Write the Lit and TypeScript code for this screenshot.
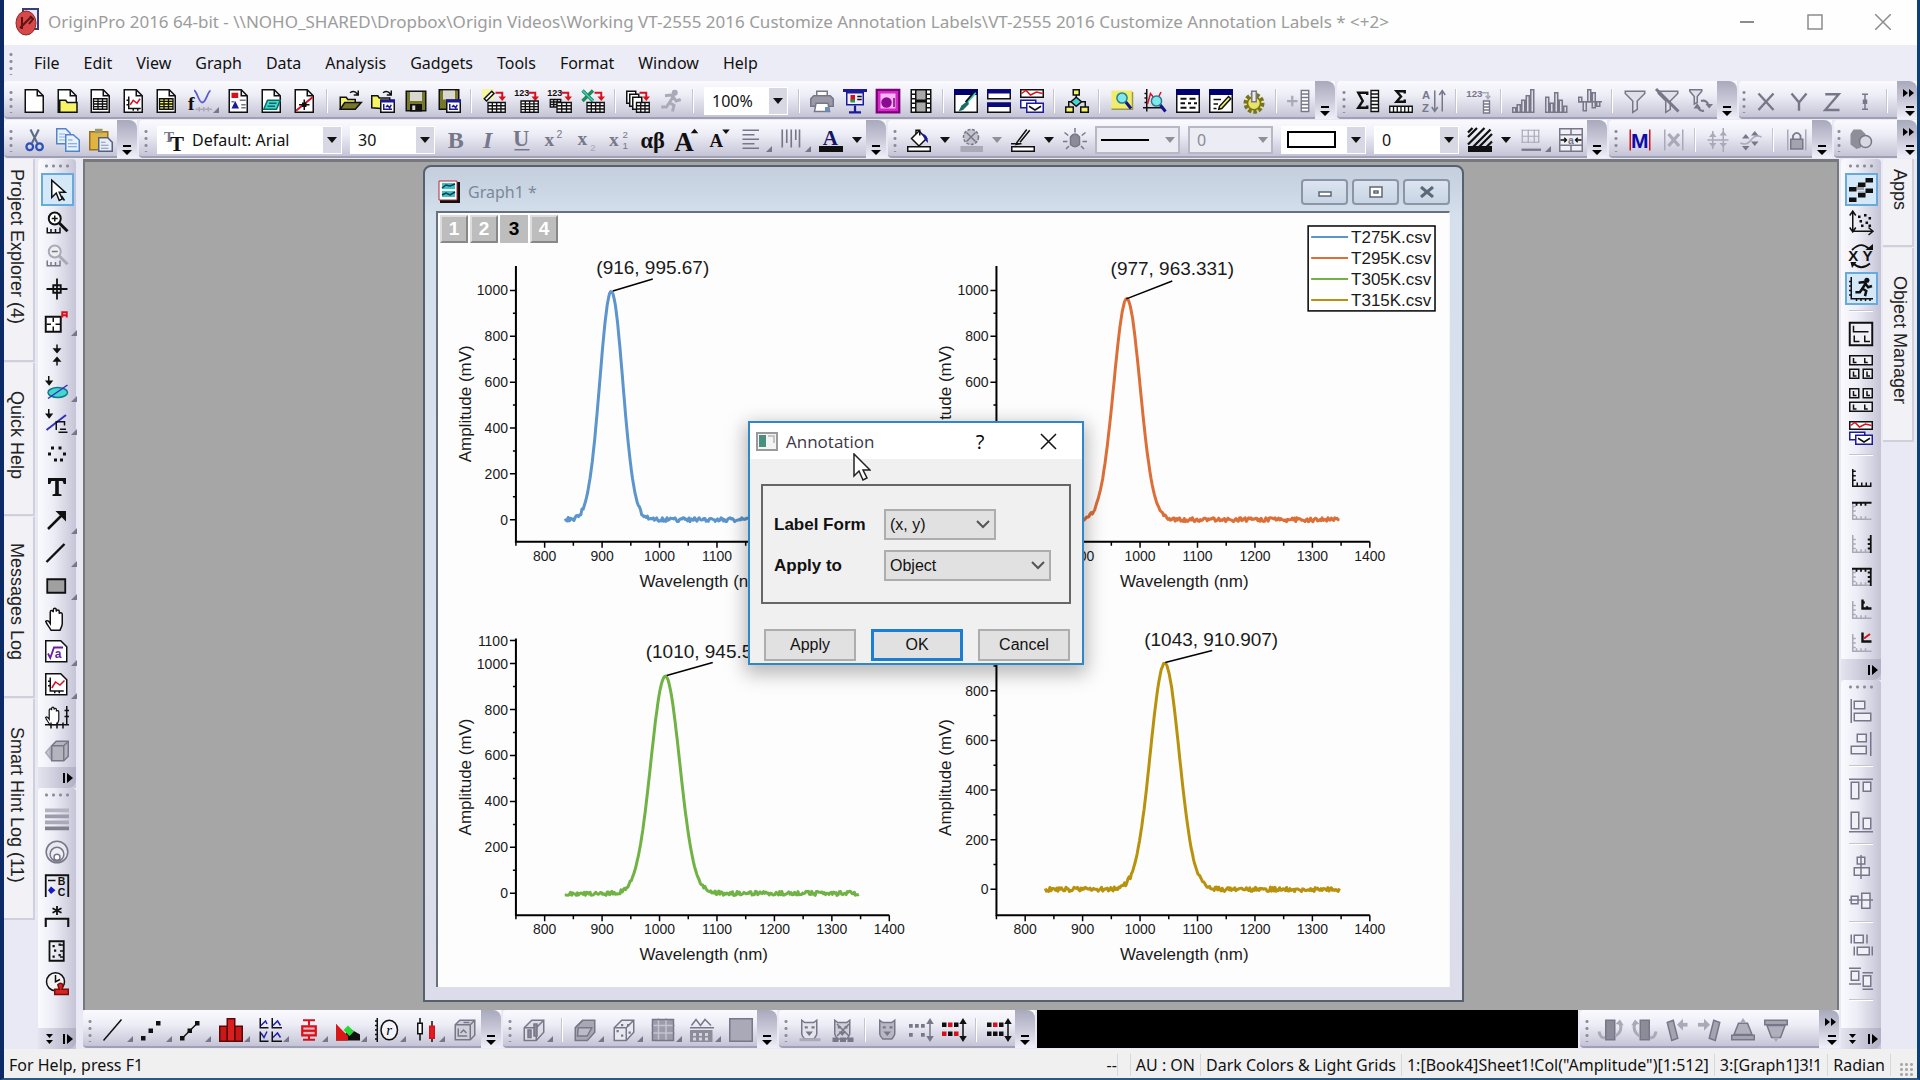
import { LitElement, html, svg, css, nothing } from "lit";
import { customElement } from "lit/decorators.js";
import { classMap } from "lit/directives/class-map.js";

const K = "#101010";
const G = "#77778a";
const L = "#a9a9b8";
const N = "#1a1a9a";
const R = "#d8101c";
const Y = "#f4f464";
const C = "#45d6cf";
const O = "#77772a";
const W = "#ffffff";

const s = (d: string, c = K, w = 1) =>
  svg`<path d=${d} fill="none" stroke=${c} stroke-width=${w}></path>`;
const f = (d: string, c = K) => svg`<path d=${d} fill=${c}></path>`;
const b = (d: string, fill = W, c = K, w = 1) =>
  svg`<path d=${d} fill=${fill} stroke=${c} stroke-width=${w}></path>`;
const t = (x: number, y: number, str: string, size: number, c = K, fam = "Liberation Sans", weight = "bold") =>
  svg`<text x=${x} y=${y} font-size=${size} fill=${c} font-family="${fam}, sans-serif" font-weight=${weight}>${str}</text>`;

const grid = (x: number, y: number, w: number, h: number, nx: number, ny: number, c = K, fill = W) => {
  let d = `M${x} ${y}h${w}v${h}h${-w}z`;
  for (let i = 1; i < nx; i++) d += `M${x + (w * i) / nx} ${y}v${h}`;
  for (let i = 1; i < ny; i++) d += `M${x} ${y + (h * i) / ny}h${w}`;
  return b(d, fill, c, 0.9);
};

const doc = b("M1.5 .5h8l4 4v11h-12z M9.5 .5v4h4");
const redArrow = [s("M9 2.5h4.5v4", R, 1.3), f("M11 5h5l-2.5 3z", R)];
const miniGraph = [b("M6.5 7.5h9v8h-9z"), f("M6 7h10v2H6z", N), s("M8.5 10v3.5h5.5M10 12l1-1 1.5 1.5 1-2", N)];
const winBar = (fill = W) => [b("M.5 .5h15v15H.5z", fill), f("M0 0h16v4H0z", "#000070")];
const lens = (x: number, y: number) => [
  s(`M${x + 2} ${y + 2}l4 5`, "#14148a", 2),
  svg`<circle cx=${x} cy=${y} r="3.4" fill="#7fe8ee" stroke="#2a7f8a"></circle>`,
];
const dots = (pts: string, c = K, r = 2) =>
  pts.split(" ").map((p) => {
    const [x, y] = p.split(",").map(Number);
    return f(`M${x} ${y}h${r}v${r}h${-r}z`, c);
  });
const hand = "M4 15.500c-1-2-3-4-3.500-6 1-1 2 0 3 1.500V3.500c0-1.500 1.800-1.500 2 0V2c.2-1.500 2-1.500 2 0v1c.3-1.300 2-1.300 2 0v1.500c.4-1 2-1 2 .5v6c0 2-1 3-1.500 4.500z";
const runner = (c: string) => [
  svg`<circle cx="10.500" cy="2.500" r="2" fill=${c}></circle>`,
  s("M4 4.500l4-.5 1.500 1L7 9l3 2-1 4M7 9l-2 3H1.500M9.500 5.500l2 2.500 3-1", c, 2),
];
const cube = (fill = "#c6c6d0") => [b("M1.500 6.500l5-5h8v8l-5 5.500h-8z", fill, G), s("M1.500 6.500h8v8.500M9.500 6.500l5-5", G)];
const tickL = (c: string) => s("M2.500 2v11.500H15M2.500 3.500h2M2.500 6.500h2M2.500 9.500h2M5.500 13v-2M8.500 13v-2M11.500 13v-2M14.500 13v-2", c);
const frame = (top: string, right: string, bottom: string, left: string) => [
  s("M2.500 13.500H15M5 13v-1.500M8 13v-1.500M11 13v-1.500", bottom),
  s("M2.500 2v12M3 5h1.500M3 8h1.500M3 11h1.500", left),
  s("M2 2.500H15M5 3v1.500M8 3v1.500M11 3v1.500", top, 1.2),
  s("M14.500 2v12M14 5h-1.500M14 8h-1.500M14 11h-1.500", right, 1.2),
];
const mask = (c = G, fill = "#e4e4ec") => [
  b("M2.500 1.500l2 1.500h6l2-1.500v9q0 1-2 3.500h-6q-2-2-2-3.500z", fill, c),
  f("M4.500 5.500h2v1.500h-2zM9 5.500h2v1.500H9zM5 9h5l-2.500 3z", c),
];
const lPanel = (x: number, y: number, w: number, h: number) => [
  b(`M${x} ${y}h${w}v${h}h${-w}z`, "#f0f0f6"),
  s(`M${x + 2.5} ${y + 1.5}v${h - 3}h2`),
  w > 8 ? s(`M${x + 10} ${y + 1.5}v${h - 3}h2`) : nothing,
];
const updown = (c = K) => [s("M14 2v12", c), f("M11.500 4L14 0l2.500 4zM11.500 12l2.500 4 2.500-4z", c)];

const ICONS: Record<string, unknown> = {
  new: doc,
  folder: [doc, b("M2.500 15.500v-8h4l1 1.500h6.500v6.500z", Y)],
  sheet: [doc, grid(3, 6.500, 9, 7, 3, 4)],
  graph: [doc, s("M4.500 5v8h8M3 7.500h1.500M3 10.500h1.500M7.500 13v1.500M10.500 13v1.500"), s("M5.500 10.500l2-3 2.500 2 2-3", R)],
  matrix: [doc, grid(3, 6.500, 9, 7, 3, 4, K, Y)],
  func: [s("M5 13.500h11M7.500 12v3M10.500 12v3M13.500 12v3", L), s("M4 1c2 0 3 8 5.500 8S13 2 15 1", "#5a5ad8", 1.2), t(0, 14, "f", 13, K, "Liberation Serif")],
  layout: [doc, f("M3 2.500h4.500V6H3z", R), f("M3 13l2.500-5L8 13z", N), s("M8.500 7.500h4M9.500 10.500h3M9.500 12.500h3M3 8.500h2", G)],
  notes: [doc, b("M5 7.500h8.500l-2.500 6H2.500z", C, "#0c6a66"), s("M6 9.500h5M5 11.500h5", "#0c6a66")],
  digitize: [doc, s("M2 14.500l11-9", R, 1.300), s("M7.500 7v7M4 10.500h7"), f("M6 9h3v3H6z")],
  open: [s("M8 2.500q3-2 5 1M13.500 1v3h-3"), b("M1.500 13.500V5.500h4l1 1.500h5v3", Y), b("M1.500 13.500l3-4.500h11l-4 4.500z", O)],
  openx: [s("M8 2.500q3-2 5 1M13.500 1v3h-3"), b("M.5 12.500V4.500h4l1 1.500h7v3l-6 4z", Y), ...miniGraph],
  save: [b("M1.500 1.500h13v13h-13z", O), f("M4 2h8v6H4z", "#d8d8d0"), f("M4 10h8v5H4z"), f("M5.500 11h2v3h-2z", "#d8d8d0")],
  savex: [b("M1.500 .5h13v13h-13z", O), f("M4 1h8v6H4z", "#d8d8d0"), ...miniGraph],
  wiz: [f("M0 0h8v7H0z", "#f6f6a0"), b("M1.500 6.500l5-5 1.500 1.500-5 5z"), ...redArrow, grid(4, 9, 11.500, 6.500, 4, 3)],
  imp1: [t(-0.5, 4.800, "123", 6), ...redArrow, grid(4, 8, 11.500, 7.500, 4, 4)],
  imp2: [t(-0.5, 4.800, "123", 6), ...redArrow, grid(1.500, 7, 7, 5, 3, 3), grid(6, 9, 9.500, 6.500, 3, 3)],
  excel: [s("M1 1l7 7M8 1L1 8", "#1f8a5a", 2.200), s("M1 1l7 7", C, 0.8), ...redArrow, grid(4, 9, 11.500, 6.500, 4, 3)],
  dup: [b("M.5 1.500h6v8h-6z"), b("M2.500 3.500h6v8h-6z"), b("M4.500 5.500h6v8h-6z"), ...redArrow, grid(7, 9, 8.500, 6.500, 3, 3)],
  run: runner(L),
  print: [b("M4.500 5.500v-4h7l0 4", W, G), b("M.5 6.500l2-2h11l2 2v5H.5z", "#9a9aa8", G), b("M4 9.500h8l1 5.500H3z", W, G), f("M10 12h3v3h-3z", "#6a90b8")],
  slide: [f("M0 0h16v2H0z", N), b("M2.500 2.500h11v8h-11z", "#eef", N), f("M5 4h3v4H5z", R), f("M5 7h3v2H5z", "#1c9a48"), s("M9.500 5h3M9.500 7h3", K), s("M8 11v4M4 15.500h8", N, 1.500)],
  purple: [b("M.5 .5h15v15H.5z", "#d428c8", "#7c0078", 1.500), f("M3 3h10v10H3z", "#f9b8f4"), svg`<circle cx="7" cy="9" r="3.500" fill="#8a0a90"></circle>`, s("M12 6v6", "#7c0078")],
  film: [f("M1 0h14v16H1z"), f("M5 1h6v6H5zM5 9h6v6H5z", "#a9a9a9"), ...dots("2,1 2,4 2,7 2,10 2,13 12,1 12,4 12,7 12,10 12,13", W, 2)],
  brush: [...winBar(), s("M14 2L8 9", K, 2), s("M14.500 2.500L9 9", C, 1), f("M9 8l1 2-4 4-3 1 2-4z", "#1b6a66")],
  panels: [b("M.5 .5h15v6H.5zM.5 9.500h15v6H.5z"), f("M0 0h16v3H0zM0 9h16v3H0z", "#0a0a80")],
  cascade: [b("M.5 .5h15v5H.5z"), s("M1 3l3-2 3 3 4-2 4 1", R), b("M.5 7.500h10v5H.5z", W, N), b("M4.500 9.500h11v6h-11z", W, N), s("M6 11.500l4 2.500 4-2.500")],
  flow: [b("M5.500 .5h4v3.500h-4z", Y), s("M7.500 4v2M4 8.500H2.500V12M11 8.500h2.500V12"), b("M7.500 5.500l3.500 3-3.500 3-3.500-3z", C), b("M.5 12h5v3.500h-5zM10.500 12h5v3.500h-5z", Y)],
  zoomg: [f("M1 1h14v12H1z", "#f0ec6c"), s("M1 13.500h14M15 2v12", "#9a9a40"), ...lens(8, 6)],
  zoomx: [s("M2.500 0v15M0 12.500h14M1 3h2M1 6h2M1 9h2"), s("M3 10l2-7 4 5 3-6", R), ...lens(9, 8)],
  tablew: [...winBar(), s("M3 6.500h4M9 6.500h4M3 9.500h3M8 9.500h2M12 9.500h2M3 12.500h4M9 12.500h4", K, 1.200)],
  notew: [...winBar(), s("M3 7h5M3 10h3M3 13h2", K), b("M13 5l1.500 1.500-6 6.500-2 .5.5-2z", Y)],
  gear: [svg`<circle cx="8" cy="9.500" r="5.500" fill="#d8d24a" stroke="#77731a" stroke-width="3" stroke-dasharray="2.200 1.200"></circle>`, svg`<circle cx="8" cy="9.500" r="4.300" fill="#e8e268" stroke="#77731a"></circle>`, b("M6.500 1.500h3v7h-3z", "#ececec", G)],
  addcol: [s("M0 8h7M3.500 4.500v7", L, 1.500), grid(9.500, 1, 5, 14, 1, 6, G)],
  sumcol: [s("M7.500 4V2.500H1.500L4.500 8l-3 4.500h6V11", K, 1.600), grid(10, 1, 5, 14, 1, 6)],
  sumrow: [s("M10.500 3V1.500H5L8 5l-3 3.500h5.500V7", K, 1.600), grid(0.500, 11.500, 15, 4, 6, 1)],
  sortaz: [t(0, 6.500, "A", 7.500, G), t(0, 15, "Z", 7.500, G), s("M8.500 1v13M6.500 12l2 3 2-3M13.500 15V1M11.500 4l2-3 2 3", G)],
  setcol: [t(-0.5, 5, "123", 6.500, G), s("M10 2.500h4v3M12.500 4.500l1.500 2 1.500-2", L), grid(11, 8, 4, 8, 1, 4, G)],
  bars1: [b("M.5 12.500h2v3h-2zM3.500 10.500h2v5h-2zM6.500 7.500h2v8h-2zM9.500 4.500h2v11h-2zM12.500 .5h2v15h-2z", "#dcdce4", G)],
  bars2: [b("M.5 5.500h2v10h-2zM3.500 9.500h2v6h-2zM6.500 2.500h2v13h-2zM9.500 7.500h2v8h-2zM12.500 11.500h2v4h-2z", "#dcdce4", G)],
  bars3: [s("M0 8.500h16", G), b("M.5 5.500h2v3h-2zM3.500 8.500h2v6h-2zM6.500 .5h2v8h-2zM9.500 8.500h2v4h-2zM9.500 2.500h2v6h-2zM12.500 8.500h2v3h-2z", "#dcdce4", G)],
  funnel: [b("M1.500 1.500h13v1.500l-5 5v5.500l-3 2V8l-5-5z", "#e0e0e8", G)],
  funneloff: [b("M1.500 1.500h13v1.500l-5 5v5.500l-3 2V8l-5-5z", "#e0e0e8", G), s("M0 0l15 15", G, 2)],
  funnelref: [b("M.5 .5h8v1L5.500 5v4l-2 1V5l-3-3.500z", "#e0e0e8", G), s("M6 12q1 3 4 2.500M8 8q4-1 5 3", G, 1.500), f("M11 10h5l-2.500 3zM3 13h5L5.500 9.500z", G)],
  X: s("M3 3l10 11M13 3L3 14", G, 1.600),
  Y: s("M3 3l5 6v5.500M13 3L8 9", G, 1.600),
  Z: s("M3.500 3.500h9l-9 10.500h9.500", G, 1.600),
  err: [s("M8 3v11M6 3.500h4M6 13.500h4", G), f("M6.500 7h3v3h-3z", G)],
  cut: [s("M5 1l4.500 9M10.500 1L6 10", "#5c6c88", 1.400), svg`<circle cx="4.500" cy="12.500" r="2.200" fill="none" stroke="#2c50b8" stroke-width="1.500"></circle>`, svg`<circle cx="11" cy="12.500" r="2.200" fill="none" stroke="#2c50b8" stroke-width="1.500"></circle>`],
  copy: [b("M.5 .5h6l3 3v7h-9z", "#e8f2ff", "#5484c8"), s("M2 4h4M2 6h5M2 8h5", "#8cb0e0", 0.8), b("M6.500 4.500h5l4 3.500v7.500h-9z", "#e8f2ff", "#5484c8"), s("M8 8h3M8 10.500h6M8 12.500h6", "#6c9cd8", 0.8)],
  paste: [b("M.5 2.500h12v12H.5z", "#e0b440", "#96701c"), f("M4 .5h5v3H4z", "#9c9868"), b("M6.500 6.500h6l3 3v6h-9z", "#e8eefa", "#54607c"), s("M8 9.500h3M8 11.500h5M8 13.500h5", "#8894b0", 0.8)],
  sup: [t(1, 12, "x", 13, G, "Liberation Serif"), t(9, 6.500, "2", 7, G, "Liberation Sans", "normal")],
  sub: [t(1, 11, "x", 13, G, "Liberation Serif"), t(9.500, 15.500, "2", 6.500, L, "Liberation Sans", "normal")],
  supsub: [t(0, 12, "x", 13, G, "Liberation Serif"), t(9, 6.500, "2", 6.500, G, "Liberation Sans", "normal"), t(9, 14, "1", 6.500, G, "Liberation Sans", "normal")],
  ab: t(-1, 13, "αβ", 15, K, "Liberation Serif"),
  fontup: [t(-0.5, 15, "A", 18, K, "Liberation Serif"), f("M10.500 3.500L13 .5l2.500 3z")],
  fontdn: [t(1, 12.500, "A", 12.500, K, "Liberation Serif"), f("M9.500 1h5L12 4z")],
  bold: t(2.500, 13.500, "B", 16, G, "Liberation Serif"),
  italic: svg`<text x="4" y="13.500" font-size="16" fill=${G} font-family="Liberation Serif, serif" font-weight="bold" font-style="italic">I</text>`,
  under: [t(2, 12, "U", 15, G, "Liberation Serif"), s("M3 14.500h10", G)],
  align: s("M1 1.500h11M1 4.500h8M1 7.500h11M1 10.500h8M1 13.500h11", G, 1.100),
  valign: s("M1.500 1v12M4.500 1v9M7.500 1v12M10.500 1v7M13 1v12", G, 1.100),
  fcolor: [t(2.500, 11, "A", 14, "#15156a", "Liberation Serif"), f("M0 12h16v4H0z")],
  bucket: [b("M3 7l5-5 5 5-5 5z"), s("M6 4V1.500h2.500V5"), f("M10 4q4 0 4 6l-2-2z", N), b("M.5 12.500h15v3H.5z")],
  pattern: [svg`<circle cx="8" cy="6" r="5" fill="#c4c4ce" stroke=${G} stroke-dasharray="2 1"></circle>`, s("M5 3l6 6M11 3L5 9", G), f("M1 12h15v4H1z", L)],
  pen: [s("M12.500 1.500L6 9.500M10.500 1L4 9.500l-.5 1.500 2-.5", K), s("M0 10.500h7", K), b("M.5 12.500h15v3H.5z")],
  bulb: [b("M5 6q3-4 6 0v5q-3 3-6 0z", "#8c8c98", G), s("M8 0v3M1 3l2.500 2M15 3l-2.500 2M0 9h3M13 9h3M2 14l2-2M14 14l-2-2", G)],
  hatch: [s("M0 6l6-6M0 11L11 0M1 15L15 1M5 15L16 4M10 15l6-6M0 3l3-3", K, 1.500), f("M0 12h16v4H0z")],
  borders: [s("M1 1.500h12M1 5.500h12M1 9.500h12M1.500 1v9M5.500 1v9M9.500 1v9M12.500 1v9", L, 0.8), s("M1 14.500h13", G, 1.500)],
  merge: [b("M.5 .5h15v15H.5zM.5 4.500h15M.5 11.500h15M8 .5v4M8 11.500v4", "#f0f0f6", G), s("M1 8h4M11 8h4M3.500 6.500L5 8l-1.500 1.500M12.500 6.500L11 8l1.500 1.500", K, 0.900), t(6, 10.500, "a", 7, G)],
  M: [s("M1.500 1v14M14.500 1v14", R), t(2, 13.500, "M", 14, "#0c0ca8")],
  Xl: [s("M2.500 1v14M14.500 1v14", L), s("M5 4l7 8M12 4l-7 8", L, 2.200)],
  ud1: [s("M4.500 2v12M11.500 0v16M1 8h14", L), f("M2 6h5L4.500 3zM2 10h5L4.500 13zM9 5h5l-2.500-3zM9 10h5l-2.500 3z", L)],
  ud2: [s("M1 10q4 2 7-2t7-2", L), f("M2 7h5L4.500 4zM2 12h5L4.500 15zM8 5h5l-2.500-3zM8 9h5l-2.500 3z", G)],
  lock: [s("M2.500 1v14M14.500 1v14", L), s("M6 8V5q2.500-3.500 5 0v3", G, 1.200), b("M4.500 7.500h8v6.500h-8z", "#a4a4b0", G)],
  obj: [f("M3 1h5l3 3v7H8v2l-3 1-4-3V4z", "#8e8e98"), svg`<circle cx="11" cy="9" r="4" fill="#d8d8e0" stroke=${G}></circle>`],
  ptr: [b("M4.500 1.500v11.500l3-3 2 5 2-1-2-4.500h4z"), s("M11 12l2 3", K)],
  zin: [svg`<circle cx="6.500" cy="5" r="4" fill="#fff" stroke=${K} stroke-width="1.300"></circle>`, s("M4.500 5h4M6.500 3v4"), s("M9.500 8l5.500 5.500", K, 2), s("M1.500 11v3.500H10V11M4 14v-2M7 14v-2")],
  zout: [svg`<circle cx="6.500" cy="5" r="4" fill="#eee" stroke=${L} stroke-width="1.300"></circle>`, s("M4.500 5h4", G), s("M9.500 8l5.500 5.500", L, 2), s("M1.500 11v3.500H10V11M4 14v-2M7 14v-2", G)],
  cross: [s("M8 1v14M1 8h14M5.500 5.500h5v5h-5z", K, 1.200)],
  mask1: [b("M.5 4.500h10v10H.5z", W, K, 1.300), s("M5.500 5v3M5.500 11v3M1 9.500h3M7 9.500h3"), s("M11.500 5V1.500h3V5M11.500 3.500h3", R, 1.300)],
  vsel: [s("M8 1v5M8 10v5", K), f("M5 3.500h6L8 7zM5 12.500h6L8 9z")],
  cyl: [svg`<ellipse cx="8.500" cy="11" rx="6.500" ry="3.300" fill=${C} stroke="#12788a"></ellipse>`, s("M2 15L15 6", "#3030c0"), s("M2.500 0v4"), f("M0 3h5.500L2.800 6.500z")],
  cyl2: [s("M2.500 0v4"), f("M0 3h5.500L2.800 6.500z"), s("M1 14L14 4", "#3030c0", 1.300), s("M7.500 14V8.500H13V11M10 13.500h4M9 15.500h6")],
  dotsel: dots("4,3 9,3 2,7 12,7 6,11 10,11", K, 2),
  text: [f("M2 2h12v4h-1.500l-.8-2H9.200v8.500l1.800.5v1H5v-1l1.800-.5V4H4.300l-.8 2H2z")],
  arrow: [s("M2 14L11 5", K, 1.700), f("M7 2h7v7z")],
  line: s("M1 14L13 2", K, 1.600),
  rect: b("M1.500 3.500h12v9h-12z", "#a0a0a0", K, 1.200),
  hand: b(hand),
  eq: [b("M.5 .5h10l4 4v10H.5z"), s("M2 9l1.500 3L6 5h6", "#6c1c9c", 1.200), t(6.500, 12, "a", 8, "#6c1c9c")],
  gr2: [b("M.5 .5h10l4 4v10H.5z"), s("M3.500 3v9h9M2 5.500h1.500M2 8.500h1.500M6.500 12v1.500M9.500 12v1.500"), s("M4.500 10l2.500-4 3 2 3-3", R)],
  handax: [svg`<g transform="scale(.8)">${b(hand)}</g>`, s("M14.500 0v12M0 12.500h16M13 3h3M13 7h3M4 11v4M8 11v4M12 11v4")],
  box3d: [b("M4.500 4.500l3-3h8v10l-3 3h-8z", "#b4b4bc", G), s("M4.500 4.500h8v10M12.500 4.500l3-3", G), b("M3.500 5.500l-3 3.500 3 4z", "#c8c8d0", L)],
  hlines: [f("M0 1h16v2.500H0z", "#b4b4c0"), f("M0 5h16v2.500H0z", "#9c9cac"), f("M0 9h16v2.500H0z", "#a9a9b8"), f("M0 13h16v2.500H0z", "#82828f")],
  rings: [svg`<circle cx="8" cy="8" r="7.200" fill="#e8e8f0" stroke=${G}></circle>`, svg`<circle cx="8" cy="9.500" r="4.600" fill="#eeeef4" stroke=${G}></circle>`, svg`<circle cx="8" cy="11.500" r="2" fill="#fff" stroke=${G}></circle>`],
  bc: [s("M.5 16V1.500h15V16", K, 1.200), s("M2 5h5", K), t(8.500, 8, "B", 7), t(8.500, 15, "C", 7), f("M4 9l3 2.500-3 2.500-2-2.500z", "#1818c8")],
  star: [s("M8 0v6M5 1.500l6 3M11 1.500l-6 3", K, 1.200), s("M.5 14V8.500h15V14", K, 1.400)],
  ruler: [s("M3 1.500h9.500v13H3z", K, 1.200), ...dots("5,4 9,3 6,7 9,10 5,11", K, 1.500), s("M12 4h-2M12 8h-2M12 12h-2")],
  clock: [svg`<circle cx="7" cy="6.500" r="6" fill="#f4f4f4" stroke=${K}></circle>`, s("M7 2v4.500l3-1.500"), b("M8.500 8.500q2-2 3.500 0l-.5 3h4v3.500h-9v-3.500h3z", "#d42424", "#7c0c0c")],
  topleft: [f("M6 9h5v3H6zM5 5h5v3H5z", "#a0a0a8"), f("M11 0h5v3h-5zM6 3h5v3H6zM0 6h5v3H0zM11 7h5v3h-5zM6 10h5v3H6zM0 13h5v3H0z")],
  scat: [s("M2.500 0v14M.5 3l2-3 2 3M.5 11l2 3 2-3M3 13.500h13M13 11l3 2.500-3 2.500"), ...dots("6,3 10,2 13,4 7,6 11,7 8,9 13,9", K, 1.700)],
  xy: [t(-0.5, 11.500, "X", 10), t(9, 11.500, "Y", 10), s("M2 4q6-6 11-1M14 13q-6 5-11 0", K, 1.200), f("M11 4h5V0zM5 12H1l1 4z")],
  runax: [s("M1.500 0v14.500H16M0 3h2M0 6h2M0 9h2M0 12h2M5 14v2M8 14v2M11 14v2M14 14v2"), svg`<g transform="translate(3 0) scale(.85)">${runner(K)}</g>`],
  lay1: [b("M.5 .5h15v15H.5z", "#f0f0f6", K, 1.300), s("M3 2.500v4h10M3.500 9v4H7M10.500 9v4H14")],
  lay2: [...lPanel(0.500, 0.500, 15, 6), ...lPanel(0.500, 9.500, 6, 6), ...lPanel(9.500, 9.500, 6, 6)],
  lay3: [...lPanel(0.500, 9.500, 15, 6), ...lPanel(0.500, 0.500, 6, 6), ...lPanel(9.500, 0.500, 6, 6)],
  ax1: tickL(K),
  ax2: frame(K, "transparent", L, L),
  ax3: frame("transparent", K, L, L),
  ax4: frame(K, K, L, L),
  ax5: [frame("transparent", "transparent", L, L), s("M9 1v6h6M9 3h1.500M12 7V5.500", K, 1.600)],
  ax6: [frame("transparent", "transparent", L, L), s("M9 1v6h6", K, 1.600), s("M10 5l4-3", R, 1.300)],
  al1: [s("M1.500 0v16", G), b("M3.500 1.500h7v5h-7zM3.500 9.500h11v5h-11z", "#f0f0f6", G)],
  al2: [s("M14.500 0v16", G), b("M5.500 1.500h6v5h-6zM1.500 9.500h10v5h-10z", "#f0f0f6", G)],
  al3: [s("M0 1.500h16", G), b("M1.500 3.500h5v11h-5zM9.500 3.500h5v6h-5z", "#f0f0f6", G)],
  al4: [s("M0 14.500h16", G), b("M1.500 1.500h5v11h-5zM9.500 5.500h5v7h-5z", "#f0f0f6", G)],
  al5: [b("M5.500 1.500h5v4.500h-5zM3.500 8.500h10v5h-10z", "#f0f0f6", G), s("M8 0v16", G)],
  al6: [b("M1.500 5.500h4.500v5H1.500zM8.500 3.500h5.500v10H8.500z", "#f0f0f6", G), s("M0 8h16", G)],
  al7: [b("M3.500 1.500h6v5h-6zM5.500 9.500h8v5h-8z", "#f0f0f6", G), s("M1.500 1v6M12 1v6M3.500 9v6M15.500 9v6", G)],
  al8: [b("M1.500 3.500h5v6h-5zM9.500 6.500h5v7h-5z", "#f0f0f6", G), s("M0 1.500h8M0 12h8M9 4.500h7M9 15.500h7", G)],
  pline: s("M1 15L13 1", K, 1),
  pdots: dots("0,12 5,7 10,2", K, 3),
  plsym: [s("M2 13L12 3"), ...dots("0,12 5,7 10,2", K, 3)],
  pcol: [b("M.5 5.500h5v10h-5zM10.500 5.500h5v10h-5z", "#c81818", "#5c0808"), b("M5.500 .5h5v15h-5z", "#d82020", "#5c0808")],
  pmulti: [s("M1.500 0v6.500H7M9.500 0v6.500H16M1.500 9v6.500H7M9.500 9v6.500H16"), s("M2 5l3-3 1 2M10 5l3-3 2 3M2 10l2 3 2-4M10 13l3-3 2 3", "#2020b0")],
  pbox: [s("M8 1v4M8 12v3M4 1.500h8M4 14.500h8", R, 1.300), b("M3.500 5.500h9v6h-9z", "#f4b8b8", R, 1.500), s("M4 8.500h8", R, 1.500)],
  parea: [f("M0 4l6 7 3-4 7 4v4H0z"), f("M0 4l8 8v3H0z", "#d81818"), f("M5 8l3-3 4 4-3 3z", "#28d838")],
  ppolar: [s("M1.500 0v16M0 2h1.500M0 5h1.500M0 8h1.500M0 11h1.500M0 14h1.500", K), svg`<ellipse cx="9.500" cy="8" rx="5.500" ry="6.500" fill="#f4f4fa" stroke=${K}></ellipse>`, svg`<text x="7.500" y="11.500" font-size="10" font-style="italic" font-family="Liberation Serif, serif">r</text>`],
  pstock: [s("M4 0v15M12 2v14", K), b("M2.500 3.500h3v7h-3z"), b("M10.500 5.500h3v8h-3z", "#e02020", R)],
  ptempl: [b("M1.500 4.500l3-3h10v10l-3 3h-10z", "#d0d0da", G), s("M1.500 4.500h10v10M11.500 4.500l3-3", G), s("M3.500 7v5h6M5 10l2-2 2 2M7 3h4", G)],
  c3bar: [...cube("#dcdce4"), b("M4 8h2v5H4zM8 4h2v8H8z", "#8c8c98", G)],
  c3wall: [b("M1.500 6.500l5-5h8v8l-5 5.500h-8z", "#a8a8b4", G), s("M1.500 6.500l5-5", G), b("M3.500 6.500h9l-3 5.500H3z", "#bcbcc8", G)],
  c3scat: [...cube("#e8e8f0"), ...dots("3,8 6,11 10,4 11,9 6,4", G, 1.500)],
  c3grid: [f("M1 1h14v14H1z", "#9c9cac"), s("M0 5h16M0 10h16M5 0v16M10 0v16", "#c4c4d0"), s("M1 1h14v14H1z", G)],
  c3wave: [s("M0 6.500h16M1 5l3-4 3 4 3-4 4 4", G), f("M0 8h15v8H0z", "#8c8c9c"), ...dots("2,10 6,10 10,10 2,13 6,13 10,13", "#d4d4dc", 2)],
  c3img: b("M.5 .5h15v15H.5z", "#a9a9b8", G),
  mk1: [...mask(), s("M1 14.500h14", L, 2)],
  mk2: [...mask(G, "#d0d0da"), s("M4 4l8 8M12 4l-8 8", G), f("M1 13h4v3H1zM6 13h4v3H6zM11 13h4v3h-4z", G)],
  mk3: [...mask(G, "#b8b8c4")],
  mk4: [...dots("0,4 4,4 8,4 0,10 8,10", G, 2.500), updown(G)],
  mk5: [...dots("0,3 8,3 4,9", K, 3), ...dots("4,3 0,9 8,9", R, 3), updown()],
  mk6: [...dots("0,3 8,3 0,9 4,9 8,9", K, 3), ...dots("4,3", R, 3), updown()],
  rot1: [b("M4.500 1.500h6v13h-6z", "#8c8c98", G), s("M0 9q1 5 4 4M11 12q5-3 3-9", L, 2), f("M11 4l3-3 2.500 4z", L)],
  rot2: [b("M5.500 1.500h6v13h-6z", "#8c8c98", G), s("M16 9q-1 5-4 4M5 12q-5-3-3-9", L, 2), f("M5 4L2 1-.5 5z", L)],
  tilt1: [b("M1.500 3l4-1.500 3 12-4 1.500z", "#a4a4b0", G), s("M15 4.500h-4", L, 2.500), f("M8 4.500l4-4v8z", L)],
  tilt2: [b("M14.500 3l-4-1.500-3 12 4 1.500z", "#a4a4b0", G), s("M0 4.500h4", L, 2.500), f("M8 4.500l-4-4v8z", L)],
  per1: [b("M5 3.500h6l3 7.500H2z", "#b0b0bc", G), b("M.5 11.500h15v3H.5z", "#a4a4b0", G), f("M6 3l2-3 2 3z", L)],
  per2: [b("M2 5h12l-3 8H5z", "#b0b0bc", G), b("M.5 1.500h15v3H.5z", "#a4a4b0", G), f("M6 13l2 3 2-3z", L)],
  tt: [t(0, 9, "T", 10, G, "Liberation Serif"), t(4, 15, "T", 14, K, "Liberation Serif")],
};

const icon = (name: string) =>
  html`<svg class="ico" viewBox="0 0 16 16" aria-hidden="true">${ICONS[name]}</svg>`;

/* A trailing mark on a name picks the variant:
   ">" corner flyout, "<" split drop arrow, "=" pressed; "|" alone is a separator. */
const tool = (spec: unknown) => {
  if (typeof spec !== "string") return spec;
  if (spec === "|") return html`<span class="sep"></span>`;
  const mark = spec.slice(-1);
  const name = /[><=]$/.test(spec) ? spec.slice(0, -1) : spec;
  return html`<button class=${classMap({ tool: true, corner: mark === ">", on: mark === "=" })} aria-label=${name}>
      ${icon(name)}${mark === ">" ? html`<i class="fly"></i>` : nothing}</button>${mark === "<"
      ? html`<button class="drop" aria-label="${name} options"><i class=${name === "pattern" ? "tri dim" : "tri"}></i></button>`
      : nothing}`;
};

const cap = (more = false) => html`<button class=${classMap({ cap: true, more })} aria-label="Toolbar options">
  ${more ? html`<svg width="12" height="8" viewBox="0 0 12 8"><path d="M0 0l5 4-5 4zM6 0l5 4-5 4z"></path></svg>` : html`<i></i>`}
  <svg width="10" height="10" viewBox="0 0 10 10"><path d="M1 0h8v2H1zM0 5h10L5 10z"></path></svg>
</button>`;

const vcap = (more = false) => html`<button class="vcap" aria-label="Toolbar options">
  ${more ? html`<svg width="8" height="12" viewBox="0 0 8 12"><path d="M0 1h7L3.500 5zM0 7h7l-3.500 4z"></path></svg>` : html`<i></i>`}
  <svg width="10" height="10" viewBox="0 0 10 10"><path d="M0 0h2v10H0zM4 0l6 5-6 5z"></path></svg>
</button>`;

const bar = (items: unknown[], cls = "", more = false) => html`<div class="bar ${cls}" role="toolbar">
  <i class="grip"></i>${items.map(tool)}${cls.includes("fill") ? html`<i class="space"></i>` : nothing}${cap(more)}
</div>`;

const vbar = (items: unknown[], cls = "", more = false) => html`<div class="vbar ${cls}" role="toolbar">
  <i class="vgrip"></i>${items.map(tool)}${cls.includes("fill") ? html`<i class="space"></i>` : nothing}${vcap(more)}
</div>`;

const combo = (label: string, value: string, cls = "", art: unknown = nothing) => html`<span class="combo ${cls}">
  <select aria-label=${label}><option>${value}</option></select>${art}
  <span class="cbtn"><i class="tri"></i></span>
</span>`;

const lineArt = (kind: string) => html`<svg class="art" width="50" height="18" viewBox="0 0 50 18">
  ${kind === "box" ? svg`<rect x="1" y="1" width="47" height="15" fill="#fff" stroke="#000" stroke-width="2"></rect>` : svg`<path d="M0 9h48" stroke="#000" stroke-width="2"></path>`}
</svg>`;

interface Panel {
  x0: number; top: number; bottom: number; zero: number; k: number;
  labels: number[]; center: number; peak: number; sigma: number; color: string;
  note: string; nx: number; ny: number; lead: string;
}

const PANELS: Panel[] = [
  { x0: 78, top: 53, bottom: 329, zero: 307, k: 0.2295, labels: [0, 200, 400, 600, 800, 1000], center: 916, peak: 995.67, sigma: 20, color: "#5c94cc", note: "(916, 995.67)", nx: 215, ny: 61, lead: "M175 78l40-12" },
  { x0: 559, top: 53, bottom: 329, zero: 307, k: 0.2295, labels: [0, 200, 400, 600, 800, 1000], center: 977, peak: 963.331, sigma: 23, color: "#dc6f38", note: "(977, 963.331)", nx: 735, ny: 62, lead: "M689 86l46-18" },
  { x0: 78, top: 426, bottom: 703, zero: 681, k: 0.23, labels: [0, 200, 400, 600, 800, 1000, 1100], center: 1010, peak: 945.5, sigma: 25, color: "#70b244", note: "(1010, 945.518)", nx: 275, ny: 445, lead: "M229 463l46-13" },
  { x0: 559, top: 427, bottom: 703, zero: 677, k: 0.2485, labels: [0, 200, 400, 600, 800, 1000], center: 1043, peak: 910.907, sigma: 25, color: "#b8920c", note: "(1043, 910.907)", nx: 774, ny: 433, lead: "M728 450l47-12" },
];

const KX = 0.575;

const curve = (p: Panel) => {
  let seed = p.center;
  const rnd = () => {
    seed = (seed * 16807) % 2147483647;
    return (seed % 1000) / 1000 - 0.5;
  };
  let d = "";
  for (let v = 835; v <= 1347; v += 2) {
    const g = p.peak * Math.exp(-((v - p.center) ** 2) / (2 * p.sigma ** 2));
    const y = p.zero - (g + rnd() * (g > 60 ? 4 : 18)) * p.k;
    d += `${d ? "L" : "M"}${(p.x0 + (v - 750) * KX).toFixed(1)} ${y.toFixed(1)}`;
  }
  return d;
};

@customElement("plot-page")
export class PlotPage extends LitElement {
  static styles = css`
    :host { display: block; }
    svg { display: block; width: 100%; height: 100%; font-family: "Liberation Sans", Arial, sans-serif; fill: #1a1a1a; }
    .tick { font-size: 14px; }
    .title { font-size: 17px; }
    .note { font-size: 19px; }
    .axis { fill: none; stroke: #000; stroke-width: 2; }
    .thin { fill: none; stroke: #000; stroke-width: 1.500; }
    .mid { text-anchor: middle; }
    .end { text-anchor: end; }
  `;

  private panel(p: Panel) {
    const X = (v: number) => p.x0 + (v - 750) * KX;
    const Yv = (v: number) => p.zero - v * p.k;
    const xs = [800, 900, 1000, 1100, 1200, 1300, 1400];
    const ticks =
      xs.map((v) => `M${X(v)} ${p.bottom}v6M${X(v - 50)} ${p.bottom}v4`).join("") +
      p.labels.map((v) => `M${p.x0} ${Yv(v)}h-6`).join("") +
      [100, 300, 500, 700, 900].map((v) => `M${p.x0} ${Yv(v)}h-3`).join("");
    const my = (p.top + p.bottom) / 2;
    return svg`
      <path class="axis" d=${`M${p.x0} ${p.top}V${p.bottom}H${X(1400)}`}></path>
      <path class="thin" d=${ticks}></path>
      ${xs.map((v) => svg`<text class="tick mid" x=${X(v)} y=${p.bottom + 19}>${v}</text>`)}
      ${p.labels.map((v) => svg`<text class="tick end" x=${p.x0 - 8} y=${Yv(v) + 5}>${v}</text>`)}
      <text class="title mid" x=${p.x0 + 188} y=${p.bottom + 45}>Wavelength (nm)</text>
      <text class="title mid" transform=${`translate(${p.x0 - 45} ${my}) rotate(-90)`}>Amplitude (mV)</text>
      <path d=${curve(p)} fill="none" stroke=${p.color} stroke-width="3" stroke-linejoin="round"></path>
      <path class="thin" d=${p.lead}></path>
      <text class="note mid" x=${p.nx} y=${p.ny}>${p.note}</text>`;
  }

  render() {
    const legend = ["T275K.csv", "T295K.csv", "T305K.csv", "T315K.csv"];
    return html`<svg viewBox="0 0 1012 774" preserveAspectRatio="xMinYMin meet" role="img" aria-label="Amplitude against wavelength, four panels">
      ${PANELS.map((p) => this.panel(p))}
      <rect x="871" y="13" width="127" height="85" fill="#fff" stroke="#000" stroke-width="1.500"></rect>
      ${legend.map((name, i) => svg`
        <path d=${`M874 ${24 + i * 21}h37`} stroke=${PANELS[i].color} stroke-width="2"></path>
        <text class="title" x="914" y=${30 + i * 21}>${name}</text>`)}
    </svg>`;
  }
}

@customElement("annotation-dialog")
export class AnnotationDialog extends LitElement {
  static styles = css`
    :host { display: block; box-sizing: border-box; border: 2px solid #2f86c8; background: #f0f0f0; box-shadow: 0 6px 18px 3px rgba(0, 0, 0, 0.28); font: 16px "Liberation Sans", Arial, sans-serif; color: #111; }
    .head { display: flex; align-items: center; height: 36px; padding-left: 6px; background: #fff; font: 17px "Open Sans", sans-serif; color: #3c3848; }
    .head h2 { flex: 1; margin: 0 0 0 8px; font: inherit; }
    .head button { width: 68px; height: 36px; padding: 0; border: 0; background: none; font: 20px "Open Sans", sans-serif; display: grid; place-items: center; }
    .body { display: flex; flex-direction: column; padding: 25px 11px 2px; }
    fieldset { display: grid; grid-template-columns: 110px 1fr; row-gap: 10px; align-content: start; align-items: center; min-width: 0; height: 120px; box-sizing: border-box; margin: 0; padding: 23px 10px 0 11px; border: 2px solid #666; }
    label { font-size: 17px; font-weight: bold; }
    .pick { display: grid; }
    .pick.short { width: 112px; }
    .pick.long { width: 167px; }
    select { grid-area: 1 / 1; height: 31px; appearance: none; border: 2px solid #adadad; border-radius: 0; background: #e1e1e1; padding: 0 4px; font: inherit; color: inherit; }
    .pick svg { grid-area: 1 / 1; justify-self: end; align-self: center; margin-right: 6px; pointer-events: none; }
    .acts { display: flex; justify-content: space-between; padding: 25px 1px 0 3px; }
    .acts button { width: 92px; height: 32px; border: 2px solid #adadad; background: #e1e1e1; padding: 0; font: inherit; color: inherit; }
    .acts .main { border: 3px solid #1a7fd4; }
  `;

  render() {
    const chev = html`<svg width="14" height="9" viewBox="0 0 14 9"><path d="M1 1l6 6 6-6" fill="none" stroke="#555" stroke-width="2"></path></svg>`;
    return html`
      <div class="head">
        <svg width="22" height="19" viewBox="0 0 22 19"><rect x="1" y="1" width="20" height="17" fill="#f4f4f4" stroke="#9a9a9a" stroke-width="2"></rect><path d="M3 3h7v12H3z" fill="#4a8f80"></path><path d="M12 3h7v2h-7zM17 5h2v6h-2z" fill="#c4c4c4"></path></svg>
        <h2>Annotation</h2>
        <button aria-label="Help">?</button>
        <button aria-label="Close"><svg width="17" height="17" viewBox="0 0 17 17"><path d="M1 1l15 15M16 1L1 16" stroke="#111" stroke-width="1.500"></path></svg></button>
      </div>
      <div class="body">
        <fieldset>
          <label for="form">Label Form</label>
          <span class="pick short"><select id="form"><option>(x, y)</option></select>${chev}</span>
          <label for="target">Apply to</label>
          <span class="pick long"><select id="target"><option>Object</option></select>${chev}</span>
        </fieldset>
        <div class="acts"><button>Apply</button><button class="main">OK</button><button>Cancel</button></div>
      </div>`;
  }
}

@customElement("app-root")
export class AppRoot extends LitElement {
  static styles = css`
    :host { display: flex; flex-direction: column; box-sizing: border-box; height: 100vh; overflow: hidden; background: #e9e9f6; border-left: 4px solid #0c2a66; border-right: 3px solid #0d3f78; border-bottom: 2px solid #2a5a84; font: 16px "Noto Sans", "Segoe UI", sans-serif; color: #111; }
    button { font: inherit; color: inherit; border: 0; background: none; padding: 0; }
    .titlebar { display: flex; align-items: center; height: 43px; padding-bottom: 2px; flex: none; background: #fdfefd; color: #9c9c9c; padding-left: 11px; }
    .titlebar h1 { flex: 1; margin: 0 0 0 8px; font: 17px "Noto Sans", sans-serif; white-space: nowrap; }
    .titlebar button { width: 68px; height: 44px; display: grid; place-items: center; }
    .menu { display: flex; align-items: center; height: 36px; flex: none; padding-left: 0; background: #ececf6; }
    .menu .grip { margin: 0 9px 0 5px; }
    .menu button { padding: 0 12px; height: 32px; }
    .row { display: flex; gap: 2px; flex: none; height: 38px; margin-bottom: 1px; }
    .bar { display: flex; align-items: center; flex: none; height: 38px; box-sizing: border-box; padding-top: 3px; border-bottom: 2px solid #a0a0b4; background: linear-gradient(#fafafe, #ededf6 40%, #c4c4d6); border-radius: 4px 0 0 4px; }
    .bar.fill { flex: 1; }
    .fill .grip { margin: 0 3px; }
    .space { flex: 1; }
    .grip { flex: none; width: 4px; height: 24px; margin: 0 5px; background: radial-gradient(circle, #8a8a98 1px, transparent 2px) 0 0 / 4px 7px; }
    .tool { position: relative; flex: none; width: 33px; height: 33px; box-sizing: border-box; display: flex; align-items: center; justify-content: center; }
    .corner { width: 39px; padding-right: 6px; }
    .fly { position: absolute; right: 3px; bottom: 4px; border: 3px solid transparent; border-right-color: #77778a; border-bottom-color: #77778a; }
    .on { border: 2px solid #66aade; background: #d4e8f8; }
    .ico { width: 24px; height: 24px; flex: none; overflow: visible; }
    .drop { width: 19px; height: 33px; display: grid; place-items: center; flex: none; }
    .blank { width: 27px; flex: none; }
    .tri { border: 5px solid transparent; border-top: 6px solid #111; border-bottom: 0; }
    .dim { border-top-color: #909098; }
    .sep { flex: none; width: 2px; height: 24px; margin: 0 5px; background: linear-gradient(90deg, #c4c4d2 1px, #fff 1px); }
    .cap { flex: none; align-self: stretch; width: 20px; display: flex; flex-direction: column; justify-content: space-between; align-items: center; padding: 8px 0 3px; margin: -3px 0 -2px; border-radius: 0 8px 0 0; background: linear-gradient(#a9a9bd, #c8c8d8 50%, #f0f0fa); }
    .more { align-items: flex-end; padding-right: 2px; }
    .combo { display: grid; flex: none; width: 85px; height: 28px; margin: 0 4px; background: #fff; }
    .combo > * { grid-area: 1 / 1; }
    .combo select { width: 100%; appearance: none; border: 1px solid #fff; border-radius: 0; background: none; padding: 0 7px; font: inherit; color: inherit; }
    .combo .cbtn { justify-self: end; width: 18px; margin: 1px; display: grid; place-items: center; background: #d8d8e4; pointer-events: none; }
    .combo .art { align-self: center; margin-left: 6px; pointer-events: none; }
    .combo .ico { align-self: center; margin-left: 7px; pointer-events: none; }
    .zoom { width: 84px; margin: 0 5px; }
    .font { width: 185px; }
    .combo.font select { padding-left: 34px; }
    .off { background: #ececf4; color: #8a8a94; }
    .combo.off select { border: 2px solid #b8b8c4; }
    .combo.off .cbtn { background: none; }
    .off .tri { border-top-color: #909098; }
    .work { flex: 1; min-height: 0; display: flex; }
    .tabs { flex: none; width: 34px; display: flex; flex-direction: column; align-items: flex-start; }
    .tabs button { box-sizing: border-box; width: 31px; writing-mode: vertical-rl; text-align: left; font: 18px "Liberation Sans", Arial, sans-serif; color: #222; background: #f2f1f5; border: solid #d0d0dc; border-width: 0 2px 2px 0; padding: 10px 4px 0 0; margin-bottom: 1px; }
    .tabs .r1, .tabs .r2 { padding-left: 4px; padding-right: 0; }
    .t1 { height: 203px; } .t2 { height: 153px; } .t3 { height: 181px; } .t4 { height: 221px; }
    .r1 { height: 88px; } .r2 { height: 194px; }
    .tabs .t2, .tabs .t4, .tabs .r2 { padding-top: 28px; } .tabs .t3 { padding-top: 26px; }
    .col { flex: none; width: 45px; display: flex; flex-direction: column; }
    .col.right { width: 42px; margin-left: 2px; }
    .vbar { display: flex; flex-direction: column; align-items: center; flex: none; width: 38px; background: linear-gradient(90deg, #fafafe, #ededf6 40%, #c4c4d6); border-radius: 4px 4px 0 0; }
    .right .vbar { width: 40px; }
    .vbar.fill { flex: 1; }
    .vbar .corner { width: 33px; padding-right: 0; }
    .vbar .fly { right: -3px; bottom: 2px; }
    .vbar .sep { width: 24px; height: 2px; margin: 5px 0; background: linear-gradient(#c4c4d2 1px, #fff 1px); }
    .vgrip { flex: none; width: 28px; height: 4px; margin: 5px 0; background: radial-gradient(circle, #8a8a98 1px, transparent 2px) 0 0 / 7px 4px; }
    .vcap { flex: none; align-self: stretch; height: 21px; display: flex; justify-content: space-between; align-items: center; padding: 0 3px 0 8px; border-radius: 0 0 8px 0; background: linear-gradient(90deg, #e4e4f0, #b0b0c4); }
    .center { flex: 1; min-width: 0; display: flex; flex-direction: column; }
    .mdi { flex: 1; min-height: 0; position: relative; overflow: hidden; background: #a5a6a5; border: solid #77787c; border-width: 3px 2px 0 2px; }
    .black { flex: 1; background: #000; }
    .child { position: absolute; left: 338px; top: 3px; width: 1041px; height: 837px; box-sizing: border-box; display: flex; flex-direction: column; border: 2px solid #56616c; border-radius: 8px 8px 0 0; padding: 0 12px 13px 11px; background: linear-gradient(#c4cede, #d4e0ec 6%, #d8e2ee 60%, #dcdcea 96%); }
    .ctitle { display: flex; align-items: center; gap: 4px; height: 39px; padding: 5px 0 0 2px; flex: none; color: #7c8898; }
    .ctitle h2 { flex: 1; margin: 0 0 0 2px; font: inherit; }
    .ctitle button { width: 47px; height: 26px; display: grid; place-items: center; border: 2px solid #8a96a8; border-radius: 4px; background: linear-gradient(#dce4f0, #c8d4e4); }
    .page { flex: 1; min-height: 0; display: grid; background: #fdfdfd; border-top: 2px solid #68727c; border-left: 2px solid #68727c; border-right: 1px solid #f4f4f4; }
    .page > * { grid-area: 1 / 1; }
    .layers { display: flex; gap: 2px; align-self: start; justify-self: start; padding: 2px; }
    .layers button { box-sizing: border-box; width: 28px; height: 28px; background: #bdbdbd; border: 2px outset #dcdcdc; color: #fff; font: bold 19px "Liberation Sans", Arial, sans-serif; }
    .layers .cur { border-color: #bdbdbd; border-style: solid; color: #000; }
    .dialog { position: absolute; left: 663px; top: 259px; width: 336px; }
    .cursor { position: absolute; left: 768px; top: 291px; }
    .status { display: flex; align-items: center; flex: none; height: 26px; padding-top: 3px; background: #f0f0f0; padding-left: 5px; white-space: nowrap; }
    .status .help { flex: 1; }
    .status span { border-right: 1px solid #d8d8d8; padding: 0 5px; }
    .status .dash { padding: 0; }
    .status .au { margin-left: 12px; border-left: 1px solid #d8d8d8; }
    .sizer { width: 14px; height: 14px; margin: 8px 4px 0 8px; background: radial-gradient(circle, #a8a8a8 1px, transparent 2px) 0 0 / 5px 5px; }
  `;

  render() {
    const menus = ["File", "Edit", "View", "Graph", "Data", "Analysis", "Gadgets", "Tools", "Format", "Window", "Help"];
    return html`
      <header class="titlebar">
        <svg width="25" height="28" viewBox="0 0 25 28"><path d="M8 1h15v20H8z" fill="#e8e8f8" stroke="#3c3c78" stroke-width="2"></path><ellipse cx="11" cy="15" rx="10" ry="12" fill="#d84848" stroke="#8c2828"></ellipse><path d="M7 9v12M5 20L16 9M15 8l3 3-4 5" stroke="#5c1414" stroke-width="2" fill="none"></path></svg>
        <h1>OriginPro 2016 64-bit - \\\\NOHO_SHARED\\Dropbox\\Origin Videos\\Working VT-2555 2016 Customize Annotation Labels\\VT-2555 2016 Customize Annotation Labels * &lt;+2&gt;</h1>
        <button aria-label="Minimize"><svg width="16" height="16" viewBox="0 0 16 16"><path d="M1 8h14" stroke="#8c8c8c" stroke-width="2"></path></svg></button>
        <button aria-label="Maximize"><svg width="16" height="16" viewBox="0 0 16 16"><path d="M1 1h14v14H1z" fill="none" stroke="#8c8c8c" stroke-width="1.500"></path></svg></button>
        <button aria-label="Close"><svg width="16" height="16" viewBox="0 0 16 16"><path d="M0 0l16 16M16 0L0 16" stroke="#8c8c8c" stroke-width="1.500"></path></svg></button>
      </header>
      <nav class="menu"><i class="grip"></i>${menus.map((m) => html`<button>${m}</button>`)}</nav>
      <div class="row">
        ${bar(["new", "folder", "sheet", "graph", "matrix", "func>", "layout", "notes", "digitize", "|", "open", "openx", "save", "savex", "|", "wiz", "imp1", "imp2", "excel", "|", "dup", "run", "|", combo("Zoom", "100%", "zoom"), "|", "print", "slide", "purple", "film", "|", "brush", "panels", "cascade", "|", "flow", "|", "zoomg", "zoomx", "tablew", "notew", "gear", "|", "addcol"])}
        ${bar(["sumcol", "sumrow", "sortaz", "|", "setcol", "|", "bars1", "bars2", "bars3", "|", "funnel", "funneloff", "funnelref"])}
        ${bar(["X", "Y", "Z", "err", "|"], "fill", true)}
      </div>
      <div class="row">
        ${bar(["cut", "copy", "paste"])}
        ${bar([combo("Font", "Default: Arial", "font", icon("tt")), combo("Font size", "30"), "bold", "italic", "under", "sup", "sub", "supsub", "ab", "fontup", "fontdn", "align>", "valign>", "fcolor<"])}
        ${bar(["bucket<", "pattern<", "pen<", "bulb", combo("Line style", "", "off", lineArt("line")), combo("Line width", "0", "off"), combo("Border style", "", "", lineArt("box")), combo("Border width", "0"), "hatch<", "borders>", "merge"])}
        ${bar(["M", "Xl", "|", "ud1", "ud2", "|", "lock"])}
        ${bar(["obj"], "fill", true)}
      </div>
      <main class="work">
        <div class="tabs">
          <button class="t1">Project Explorer (4)</button><button class="t2">Quick Help</button>
          <button class="t3">Messages Log</button><button class="t4">Smart Hint Log (11)</button>
        </div>
        <div class="col">
          ${vbar(["ptr=", "zin", "zout", "cross", "mask1>", "vsel", "cyl>", "cyl2>", "dotsel", "text", "arrow>", "line>", "rect>", "hand", "eq>", "gr2>", "handax", "box3d"])}
          ${vbar(["hlines", "rings", "bc", "star", "ruler", "clock"], "fill", true)}
        </div>
        <div class="center">
          <div class="mdi">
            <section class="child">
              <div class="ctitle">
                <svg width="24" height="24" viewBox="0 0 24 24"><path d="M2 2h20v21H2z" fill="#101010"></path><path d="M1 1h18v19H1z" fill="#fff" stroke="#b02838" stroke-width="1"></path><path d="M4 3h13v6H4zM4 11h13v6H4z" fill="#38c8b8"></path><path d="M4 8l4-3 4 1 5-2M4 15l4-2 4 2 5-3" stroke="#14306c" stroke-width="1.500" fill="none"></path></svg>
                <h2>Graph1 *</h2>
                <button aria-label="Minimize window"><svg width="14" height="12" viewBox="0 0 14 12"><path d="M1 6h12v4H1z" fill="#fff" stroke="#5c6878" stroke-width="1.500"></path></svg></button>
                <button aria-label="Restore window"><svg width="14" height="12" viewBox="0 0 14 12"><path d="M1 1h12v10H1zM5 5h4v2H5z" fill="#fff" stroke="#5c6878" stroke-width="1.500"></path></svg></button>
                <button aria-label="Close window"><svg width="14" height="12" viewBox="0 0 14 12"><path d="M1 1l12 10M13 1L1 11" stroke="#5c6878" stroke-width="3"></path></svg></button>
              </div>
              <div class="page">
                <plot-page></plot-page>
                <div class="layers">${[1, 2, 3, 4].map((n) => html`<button class=${classMap({ cur: n === 3 })}>${n}</button>`)}</div>
              </div>
            </section>
            <annotation-dialog class="dialog" role="dialog" aria-label="Annotation"></annotation-dialog>
            <svg class="cursor" width="18" height="28" viewBox="0 0 18 28"><path d="M1 1v22l5-5 4 9 4-2-4-8h7z" fill="#fff" stroke="#222" stroke-width="1.500"></path></svg>
          </div>
          <div class="row">
            ${bar(["pline>", "pdots>", "plsym>", "pcol>", "pmulti>", "pbox>", "parea>", "ppolar>", "pstock>", "ptempl"])}
            ${bar(["c3bar>", "|", "c3wall>", "c3scat>", "c3grid>", "c3wave>", "c3img"])}
            ${bar(["mk1", "mk2", "|", "mk3", "mk4", "mk5", "|", "mk6"])}
            <div class="black"></div>
            ${bar(["rot1", "rot2", "tilt1", "tilt2", "per1", "per2", html`<span class="blank"></span>`], "", true)}
          </div>
        </div>
        <div class="col right">
          ${vbar(["topleft=", "scat", "xy", "runax=", "|", "lay1", "lay2", "lay3", "cascade", "|", "ax1", "ax2", "ax3", "ax4", "ax5", "ax6"])}
          ${vbar(["al1", "al2", "|", "al3", "al4", "|", "al5", "al6", "|", "al7", "al8", "|"], "fill", true)}
        </div>
        <div class="tabs"><button class="r1">Apps</button><button class="r2">Object Manager</button></div>
      </main>
      <footer class="status">
        <div class="help">For Help, press F1</div>
        <span class="dash">--</span><span class="au">AU : ON</span><span>Dark Colors &amp; Light Grids</span>
        <span>1:[Book4]Sheet1!Col("Amplitude")[1:512]</span><span>3:[Graph1]3!1</span><span>Radian</span><i class="sizer"></i>
      </footer>`;
  }
}
